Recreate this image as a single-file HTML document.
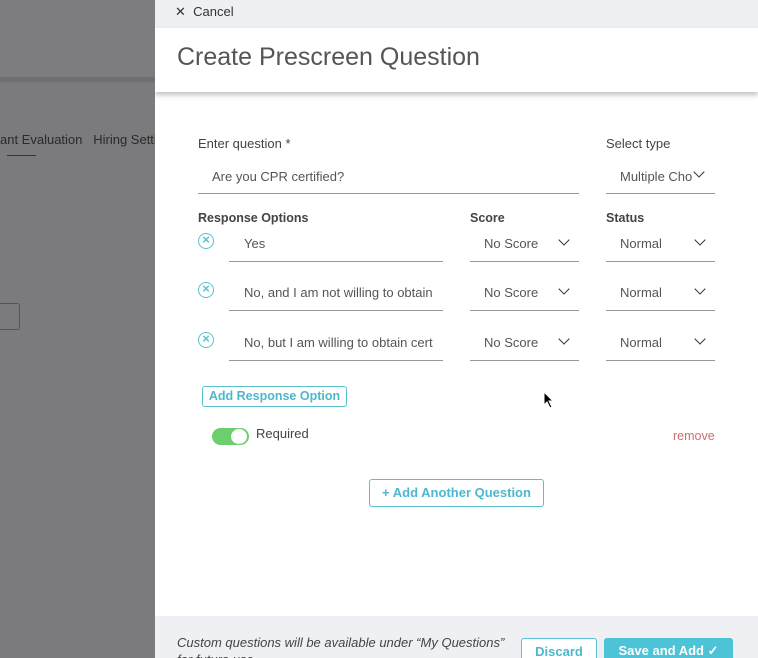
<!DOCTYPE html>
<html style="width:758px;height:658px;overflow:hidden"><head><style>
*{margin:0;padding:0;box-sizing:border-box}
body{width:758px;height:658px;overflow:hidden;position:relative;font-family:"Liberation Sans",sans-serif;background:#7b7b7d}
.abs{position:absolute}
.panel{left:155px;top:0;width:603px;height:658px;background:#fff;overflow:hidden}
.lbl{font-size:13px;color:#444}
.bold{font-weight:bold;font-size:12.5px;color:#444}
.field{border-bottom:1px solid #999;font-size:13px;color:#555}
.chev{position:absolute;right:11px;top:0px;width:8px;height:8px;border-right:1.4px solid #333;border-bottom:1.4px solid #333;transform:rotate(45deg)}
.xc{width:16px;height:16px;border:1.6px solid #5bc0d0;border-radius:50%;color:#5bc0d0;font-size:13px;font-weight:bold;line-height:12px;text-align:center}
.btn{border:1px solid #5bbfcf;border-radius:3px;color:#4db8cb;font-size:13px;text-align:center}
</style></head><body>
<div class="abs" style="left:0;top:0;width:155px;height:78px;background:#7d7d7f"></div>
<div class="abs" style="left:0;top:77px;width:155px;height:5px;background:#6f6f71"></div>
<div class="abs" style="left:0;top:132px;font-size:13px;color:#2a2a2a;white-space:nowrap">ant Evaluation&nbsp;&nbsp;&nbsp;Hiring Setti</div>
<div class="abs" style="left:7px;top:155px;width:29px;height:1px;background:#333"></div>
<div class="abs" style="left:-10px;top:303px;width:30px;height:27px;border:1px solid #555;border-radius:3px"></div>
<div class="abs panel">
 <div class="abs" style="left:0;top:0;width:603px;height:28px;background:#eef0f3"></div>
 <div class="abs" style="left:20px;top:4px;font-size:13px;color:#333">✕&nbsp;&nbsp;Cancel</div>
 <div class="abs" style="left:0;top:28px;width:603px;height:64px;background:#fff;box-shadow:0 3px 5px rgba(0,0,0,.25)"></div>
 <div class="abs" style="left:22px;top:43px;font-size:25px;color:#555">Create Prescreen Question</div>
 <div class="abs lbl" style="left:43px;top:136px">Enter question *</div>
 <div class="abs lbl" style="left:451px;top:136px">Select type</div>
 <div class="abs field" style="left:43px;top:168px;width:381px;height:26px;padding-left:14px;padding-top:1px">Are you CPR certified?</div>
 <div class="abs field" style="left:451px;top:168px;width:109px;height:26px;padding-left:14px;padding-top:1px;overflow:hidden;white-space:nowrap">Multiple Cho<span class="chev" style="background:#fff;right:12px"></span></div>
 <div class="abs bold" style="left:43px;top:211px">Response Options</div>
 <div class="abs bold" style="left:315px;top:211px">Score</div>
 <div class="abs bold" style="left:451px;top:211px">Status</div>

 <div class="abs xc" style="left:43px;top:233px">×</div>
 <div class="abs field" style="left:74px;top:236px;width:214px;height:26px;padding-left:15px">Yes</div>
 <div class="abs field" style="left:315px;top:236px;width:109px;height:26px;padding-left:14px">No Score<span class="chev"></span></div>
 <div class="abs field" style="left:451px;top:236px;width:109px;height:26px;padding-left:14px">Normal<span class="chev"></span></div>

 <div class="abs xc" style="left:43px;top:282px">×</div>
 <div class="abs field" style="left:74px;top:285px;width:214px;height:26px;padding-left:15px;white-space:nowrap;overflow:hidden">No, and I am not willing to obtain</div>
 <div class="abs field" style="left:315px;top:285px;width:109px;height:26px;padding-left:14px">No Score<span class="chev"></span></div>
 <div class="abs field" style="left:451px;top:285px;width:109px;height:26px;padding-left:14px">Normal<span class="chev"></span></div>

 <div class="abs xc" style="left:43px;top:332px">×</div>
 <div class="abs field" style="left:74px;top:335px;width:214px;height:26px;padding-left:15px;white-space:nowrap;overflow:hidden">No, but I am willing to obtain cert</div>
 <div class="abs field" style="left:315px;top:335px;width:109px;height:26px;padding-left:14px">No Score<span class="chev"></span></div>
 <div class="abs field" style="left:451px;top:335px;width:109px;height:26px;padding-left:14px">Normal<span class="chev"></span></div>

 <div class="abs btn" style="left:47px;top:386px;width:145px;height:21px;line-height:19px;font-weight:bold;font-size:12.5px">Add Response Option</div>
 <div class="abs" style="left:57px;top:428px;width:37px;height:17px;border-radius:9px;background:#6bcf6d"></div>
 <div class="abs" style="left:76px;top:429px;width:16px;height:15px;border-radius:50%;background:#fff"></div>
 <div class="abs lbl" style="left:101px;top:426px">Required</div>
 <div class="abs" style="left:518px;top:429px;font-size:12.5px;color:#c97070">remove</div>
 <div class="abs btn" style="left:214px;top:479px;width:175px;height:28px;line-height:26px;font-weight:bold">+ Add Another Question</div>

 <div class="abs" style="left:0;top:616px;width:603px;height:42px;background:#eef0f3"></div>
 <div class="abs" style="left:22px;top:635px;font-size:13px;font-style:italic;color:#444;white-space:nowrap">Custom questions will be available under “My Questions”</div>
 <div class="abs" style="left:22px;top:652px;font-size:13px;font-style:italic;color:#444">for future use</div>
 <div class="abs btn" style="left:366px;top:638px;width:76px;height:30px;line-height:26px;font-weight:bold;background:#fff">Discard</div>
 <div class="abs" style="left:449px;top:638px;width:129px;height:30px;line-height:26px;border-radius:3px;background:#4cc3d6;color:#fff;font-weight:bold;font-size:13px;text-align:center">Save and Add ✓</div>
</div>
<svg class="abs" style="left:543px;top:391px" width="12" height="18" viewBox="0 0 12 18"><path d="M1 1 L1 14 L4 11 L7 17 L9 16 L6 10 L10 10 Z" fill="#000" stroke="#fff" stroke-width="1"/></svg>
</body></html>
